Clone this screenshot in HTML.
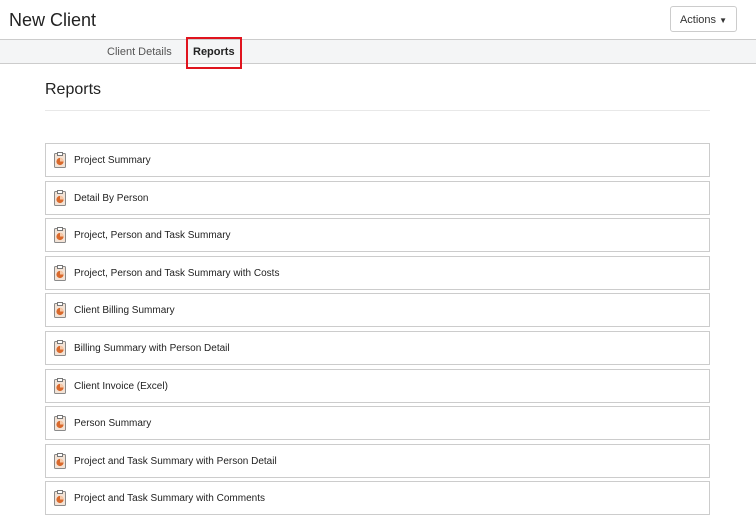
<!DOCTYPE html><html><head><style>
body{margin:0;width:756px;height:519px;overflow:hidden;background:#fff;font-family:"Liberation Sans",sans-serif;color:#333;position:relative}
.t{position:absolute;left:9px;top:10px;font-size:18px;color:#222}
.btn{position:absolute;left:670px;top:6px;width:67px;height:26px;border:1px solid #ccc;border-radius:3px;box-sizing:border-box;font-size:11px;line-height:26px;text-align:center;color:#333;background:#fff}
.nav{position:absolute;left:0;top:39px;width:756px;height:25px;background:#f4f5f6;border-top:1px solid #ccc;border-bottom:1px solid #ccc;box-sizing:border-box}
.n{position:absolute;top:46px;font-size:11px}
.box{position:absolute;left:186px;top:37px;width:56px;height:32px;border:2px solid #e0141e;box-sizing:border-box}
h2{position:absolute;left:45px;top:81px;margin:0;font-size:16px;font-weight:normal;color:#222}
.hr{position:absolute;left:45px;top:110px;width:665px;border-top:1px solid #e8e8e8}
.r{position:absolute;left:45px;width:665px;height:34px;border:1px solid #ccc;box-sizing:border-box;font-size:10px;line-height:34px;padding-left:28px;color:#222}
.r svg{position:absolute;left:8px;top:8px}
</style></head><body>
<div class="t">New Client</div>
<div class="btn">Actions <span style="font-size:8px">▼</span></div>
<div class="nav"></div>
<div class="n" style="left:107px;color:#555">Client Details</div>
<div class="n" style="left:193px;font-weight:bold;color:#222">Reports</div>
<div class="box"></div>
<h2>Reports</h2><div class="hr"></div>
<div id="rows"></div>
<script>
var L=["Project Summary","Detail By Person","Project, Person and Task Summary","Project, Person and Task Summary with Costs","Client Billing Summary","Billing Summary with Person Detail","Client Invoice (Excel)","Person Summary","Project and Task Summary with Person Detail","Project and Task Summary with Comments"];
var h="";L.forEach(function(s,i){h+='<div class="r" style="top:'+(143+i*37.6)+'px"><svg width="12" height="16" viewBox="0 0 12 16"><rect x="0.5" y="1.5" width="11" height="14" rx="1" fill="#f3e3d6" stroke="#8a8a8a"/><rect x="3.5" y="0.5" width="5" height="3" fill="#fff" stroke="#777"/><circle cx="6" cy="9.5" r="3.6" fill="#d9692c"/><path d="M6 9.5V5.9A3.6 3.6 0 0 1 9.6 9.5Z" fill="#f6c9a8"/></svg>'+s+'</div>'});
document.getElementById("rows").innerHTML=h;
</script>
</body></html>
